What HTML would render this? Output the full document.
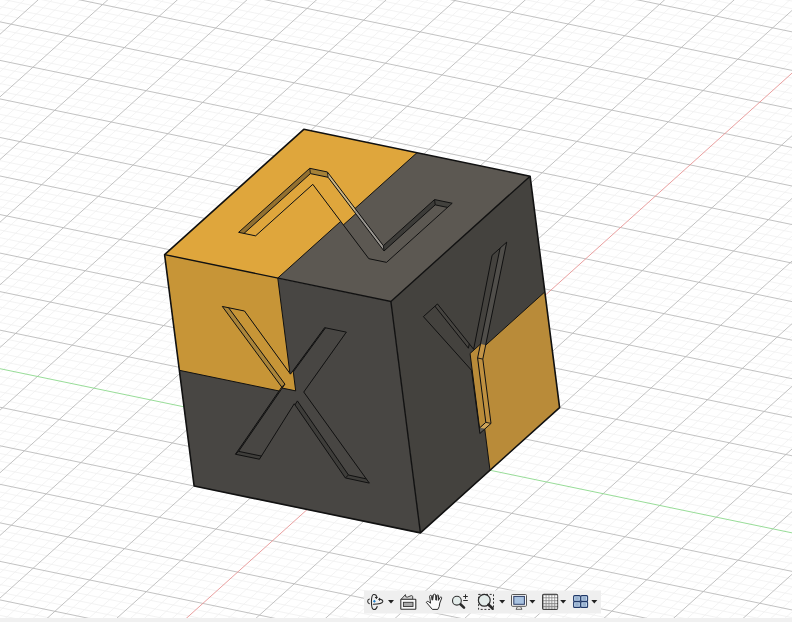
<!DOCTYPE html><html><head><meta charset="utf-8"><style>
html,body{margin:0;padding:0;width:792px;height:622px;overflow:hidden;background:#fff;font-family:"Liberation Sans",sans-serif}
svg{position:absolute;left:0;top:0}
</style></head><body><svg width="792" height="622" viewBox="0 0 792 622"><defs><clipPath id="clip_top"><polygon points="238.62,232.33 309.75,168.30 327.40,171.96 383.32,245.67 434.55,199.56 452.20,203.22 386.50,262.36 368.85,258.70 312.80,184.35 255.59,235.85" /></clipPath><clipPath id="floor_top"><polygon points="239.30,237.65 310.43,173.62 328.08,177.28 384.00,250.99 435.23,204.88 452.88,208.54 387.18,267.68 369.53,264.02 313.48,189.67 256.27,241.17" /></clipPath><clipPath id="clip_left"><polygon points="222.32,306.44 244.50,311.03 290.45,374.17 324.61,327.64 346.34,332.14 303.74,392.02 369.33,483.12 345.31,477.91 294.22,403.79 259.43,459.21 235.44,454.24 281.73,387.01" /></clipPath><clipPath id="floor_left"><polygon points="225.52,303.56 247.70,308.15 293.65,371.29 327.81,324.76 349.54,329.26 306.94,389.14 372.53,480.23 348.51,475.03 297.42,400.91 262.63,456.33 238.64,451.36 284.93,384.13" /></clipPath><clipPath id="clip_right"><polygon points="423.40,316.62 437.46,303.96 473.65,349.29 492.08,255.31 506.70,242.15 482.81,359.09 491.01,423.42 479.88,433.45 471.52,370.29" /></clipPath><clipPath id="floor_right"><polygon points="418.19,315.54 432.25,302.88 468.44,348.21 486.88,254.23 501.49,241.07 477.61,358.01 485.81,422.34 474.67,432.37 466.31,369.21" /></clipPath></defs><rect width="792" height="622" fill="#fff"/><g stroke="#f0f0f0" stroke-width="0.8"><line x1="-589.97" y1="515.15" x2="147.78" y2="-148.93" /><line x1="-578.65" y1="517.49" x2="159.09" y2="-146.58" /><line x1="-567.34" y1="519.84" x2="170.41" y2="-144.24" /><line x1="-556.02" y1="522.18" x2="181.72" y2="-141.89" /><line x1="-533.39" y1="526.87" x2="204.35" y2="-137.20" /><line x1="-522.08" y1="529.22" x2="215.67" y2="-134.86" /><line x1="-510.76" y1="531.56" x2="226.98" y2="-132.51" /><line x1="-499.45" y1="533.91" x2="238.30" y2="-130.17" /><line x1="-476.82" y1="538.60" x2="260.93" y2="-125.48" /><line x1="-465.50" y1="540.94" x2="272.24" y2="-123.13" /><line x1="-454.19" y1="543.29" x2="283.56" y2="-120.79" /><line x1="-442.87" y1="545.63" x2="294.87" y2="-118.44" /><line x1="-420.24" y1="550.32" x2="317.50" y2="-113.75" /><line x1="-408.93" y1="552.67" x2="328.82" y2="-111.41" /><line x1="-397.61" y1="555.01" x2="340.13" y2="-109.06" /><line x1="-386.30" y1="557.36" x2="351.45" y2="-106.72" /><line x1="-363.67" y1="562.05" x2="374.08" y2="-102.03" /><line x1="-352.35" y1="564.39" x2="385.39" y2="-99.68" /><line x1="-341.04" y1="566.74" x2="396.71" y2="-97.34" /><line x1="-329.72" y1="569.08" x2="408.02" y2="-94.99" /><line x1="-307.09" y1="573.77" x2="430.65" y2="-90.30" /><line x1="-295.78" y1="576.12" x2="441.97" y2="-87.96" /><line x1="-284.46" y1="578.46" x2="453.28" y2="-85.61" /><line x1="-273.15" y1="580.81" x2="464.60" y2="-83.27" /><line x1="-250.52" y1="585.50" x2="487.23" y2="-78.58" /><line x1="-239.20" y1="587.84" x2="498.54" y2="-76.23" /><line x1="-227.89" y1="590.19" x2="509.86" y2="-73.89" /><line x1="-216.57" y1="592.53" x2="521.17" y2="-71.54" /><line x1="-193.94" y1="597.22" x2="543.80" y2="-66.85" /><line x1="-182.63" y1="599.57" x2="555.12" y2="-64.51" /><line x1="-171.31" y1="601.91" x2="566.43" y2="-62.16" /><line x1="-160.00" y1="604.26" x2="577.75" y2="-59.82" /><line x1="-137.37" y1="608.95" x2="600.38" y2="-55.13" /><line x1="-126.05" y1="611.29" x2="611.69" y2="-52.78" /><line x1="-114.74" y1="613.64" x2="623.01" y2="-50.44" /><line x1="-103.42" y1="615.98" x2="634.32" y2="-48.09" /><line x1="-80.79" y1="620.67" x2="656.95" y2="-43.40" /><line x1="-69.48" y1="623.02" x2="668.27" y2="-41.06" /><line x1="-58.16" y1="625.36" x2="679.58" y2="-38.71" /><line x1="-46.85" y1="627.71" x2="690.90" y2="-36.37" /><line x1="-24.22" y1="632.40" x2="713.53" y2="-31.68" /><line x1="-12.90" y1="634.74" x2="724.84" y2="-29.33" /><line x1="-1.59" y1="637.09" x2="736.16" y2="-26.99" /><line x1="9.73" y1="639.43" x2="747.47" y2="-24.64" /><line x1="32.36" y1="644.12" x2="770.10" y2="-19.95" /><line x1="43.67" y1="646.47" x2="781.42" y2="-17.61" /><line x1="54.99" y1="648.81" x2="792.73" y2="-15.26" /><line x1="66.30" y1="651.16" x2="804.05" y2="-12.92" /><line x1="88.93" y1="655.85" x2="826.68" y2="-8.23" /><line x1="100.25" y1="658.19" x2="837.99" y2="-5.88" /><line x1="111.56" y1="660.54" x2="849.31" y2="-3.54" /><line x1="122.88" y1="662.88" x2="860.62" y2="-1.19" /><line x1="145.51" y1="667.57" x2="883.25" y2="3.50" /><line x1="156.82" y1="669.92" x2="894.57" y2="5.84" /><line x1="168.14" y1="672.26" x2="905.88" y2="8.19" /><line x1="179.45" y1="674.61" x2="917.20" y2="10.53" /><line x1="202.08" y1="679.30" x2="939.83" y2="15.22" /><line x1="213.40" y1="681.64" x2="951.14" y2="17.57" /><line x1="224.71" y1="683.99" x2="962.46" y2="19.91" /><line x1="236.03" y1="686.33" x2="973.77" y2="22.26" /><line x1="258.66" y1="691.02" x2="996.40" y2="26.95" /><line x1="269.97" y1="693.37" x2="1007.72" y2="29.29" /><line x1="281.29" y1="695.71" x2="1019.03" y2="31.64" /><line x1="292.60" y1="698.06" x2="1030.35" y2="33.98" /><line x1="315.23" y1="702.75" x2="1052.98" y2="38.67" /><line x1="326.55" y1="705.09" x2="1064.29" y2="41.02" /><line x1="337.86" y1="707.44" x2="1075.61" y2="43.36" /><line x1="349.18" y1="709.78" x2="1086.92" y2="45.71" /><line x1="371.81" y1="714.47" x2="1109.55" y2="50.40" /><line x1="383.12" y1="716.82" x2="1120.87" y2="52.74" /><line x1="394.44" y1="719.16" x2="1132.18" y2="55.09" /><line x1="405.75" y1="721.51" x2="1143.50" y2="57.43" /><line x1="428.38" y1="726.20" x2="1166.13" y2="62.12" /><line x1="439.70" y1="728.54" x2="1177.44" y2="64.47" /><line x1="451.01" y1="730.89" x2="1188.76" y2="66.81" /><line x1="462.33" y1="733.23" x2="1200.07" y2="69.16" /><line x1="484.96" y1="737.92" x2="1222.70" y2="73.85" /><line x1="496.27" y1="740.27" x2="1234.02" y2="76.19" /><line x1="507.59" y1="742.61" x2="1245.33" y2="78.54" /><line x1="518.90" y1="744.96" x2="1256.65" y2="80.88" /><line x1="541.53" y1="749.65" x2="1279.28" y2="85.57" /><line x1="552.85" y1="751.99" x2="1290.59" y2="87.92" /><line x1="564.16" y1="754.34" x2="1301.91" y2="90.26" /><line x1="575.48" y1="756.68" x2="1313.22" y2="92.61" /><line x1="598.11" y1="761.37" x2="1335.85" y2="97.30" /><line x1="609.42" y1="763.72" x2="1347.17" y2="99.64" /><line x1="620.74" y1="766.06" x2="1358.48" y2="101.99" /><line x1="632.05" y1="768.41" x2="1369.80" y2="104.33" /><line x1="654.68" y1="773.10" x2="1392.43" y2="109.02" /><line x1="-592.21" y1="508.02" x2="658.50" y2="767.23" /><line x1="-585.25" y1="501.75" x2="665.46" y2="760.96" /><line x1="-578.29" y1="495.49" x2="672.42" y2="754.70" /><line x1="-571.33" y1="489.22" x2="679.38" y2="748.43" /><line x1="-557.41" y1="476.69" x2="693.30" y2="735.90" /><line x1="-550.45" y1="470.43" x2="700.26" y2="729.64" /><line x1="-543.49" y1="464.16" x2="707.22" y2="723.37" /><line x1="-536.53" y1="457.90" x2="714.18" y2="717.11" /><line x1="-522.61" y1="445.37" x2="728.10" y2="704.58" /><line x1="-515.65" y1="439.10" x2="735.06" y2="698.31" /><line x1="-508.69" y1="432.84" x2="742.02" y2="692.05" /><line x1="-501.73" y1="426.57" x2="748.98" y2="685.78" /><line x1="-487.81" y1="414.04" x2="762.90" y2="673.25" /><line x1="-480.85" y1="407.78" x2="769.86" y2="666.99" /><line x1="-473.89" y1="401.51" x2="776.82" y2="660.72" /><line x1="-466.93" y1="395.25" x2="783.78" y2="654.46" /><line x1="-453.01" y1="382.72" x2="797.70" y2="641.93" /><line x1="-446.05" y1="376.45" x2="804.66" y2="635.66" /><line x1="-439.09" y1="370.19" x2="811.62" y2="629.40" /><line x1="-432.13" y1="363.92" x2="818.58" y2="623.13" /><line x1="-418.21" y1="351.39" x2="832.50" y2="610.60" /><line x1="-411.25" y1="345.13" x2="839.46" y2="604.34" /><line x1="-404.29" y1="338.86" x2="846.42" y2="598.07" /><line x1="-397.33" y1="332.60" x2="853.38" y2="591.81" /><line x1="-383.41" y1="320.07" x2="867.30" y2="579.28" /><line x1="-376.45" y1="313.80" x2="874.26" y2="573.01" /><line x1="-369.49" y1="307.54" x2="881.22" y2="566.75" /><line x1="-362.53" y1="301.27" x2="888.18" y2="560.48" /><line x1="-348.61" y1="288.74" x2="902.10" y2="547.95" /><line x1="-341.65" y1="282.48" x2="909.06" y2="541.69" /><line x1="-334.69" y1="276.21" x2="916.02" y2="535.42" /><line x1="-327.73" y1="269.95" x2="922.98" y2="529.16" /><line x1="-313.81" y1="257.42" x2="936.90" y2="516.63" /><line x1="-306.85" y1="251.15" x2="943.86" y2="510.36" /><line x1="-299.89" y1="244.89" x2="950.82" y2="504.10" /><line x1="-292.93" y1="238.62" x2="957.78" y2="497.83" /><line x1="-279.01" y1="226.09" x2="971.70" y2="485.30" /><line x1="-272.05" y1="219.83" x2="978.66" y2="479.04" /><line x1="-265.09" y1="213.56" x2="985.62" y2="472.77" /><line x1="-258.13" y1="207.30" x2="992.58" y2="466.51" /><line x1="-244.21" y1="194.77" x2="1006.50" y2="453.98" /><line x1="-237.25" y1="188.50" x2="1013.46" y2="447.71" /><line x1="-230.29" y1="182.24" x2="1020.42" y2="441.45" /><line x1="-223.33" y1="175.97" x2="1027.38" y2="435.18" /><line x1="-209.41" y1="163.44" x2="1041.30" y2="422.65" /><line x1="-202.45" y1="157.18" x2="1048.26" y2="416.39" /><line x1="-195.49" y1="150.91" x2="1055.22" y2="410.12" /><line x1="-188.53" y1="144.65" x2="1062.18" y2="403.86" /><line x1="-174.61" y1="132.12" x2="1076.10" y2="391.33" /><line x1="-167.65" y1="125.85" x2="1083.06" y2="385.06" /><line x1="-160.69" y1="119.59" x2="1090.02" y2="378.80" /><line x1="-153.73" y1="113.32" x2="1096.98" y2="372.53" /><line x1="-139.81" y1="100.79" x2="1110.90" y2="360.00" /><line x1="-132.85" y1="94.53" x2="1117.86" y2="353.74" /><line x1="-125.89" y1="88.26" x2="1124.82" y2="347.47" /><line x1="-118.93" y1="82.00" x2="1131.78" y2="341.21" /><line x1="-105.01" y1="69.47" x2="1145.70" y2="328.68" /><line x1="-98.05" y1="63.20" x2="1152.66" y2="322.41" /><line x1="-91.09" y1="56.94" x2="1159.62" y2="316.15" /><line x1="-84.13" y1="50.67" x2="1166.58" y2="309.88" /><line x1="-70.21" y1="38.14" x2="1180.50" y2="297.35" /><line x1="-63.25" y1="31.88" x2="1187.46" y2="291.09" /><line x1="-56.29" y1="25.61" x2="1194.42" y2="284.82" /><line x1="-49.33" y1="19.35" x2="1201.38" y2="278.56" /><line x1="-35.41" y1="6.82" x2="1215.30" y2="266.03" /><line x1="-28.45" y1="0.55" x2="1222.26" y2="259.76" /><line x1="-21.49" y1="-5.71" x2="1229.22" y2="253.50" /><line x1="-14.53" y1="-11.98" x2="1236.18" y2="247.23" /><line x1="-0.61" y1="-24.51" x2="1250.10" y2="234.70" /><line x1="6.35" y1="-30.77" x2="1257.06" y2="228.44" /><line x1="13.31" y1="-37.04" x2="1264.02" y2="222.17" /><line x1="20.27" y1="-43.30" x2="1270.98" y2="215.91" /><line x1="34.19" y1="-55.83" x2="1284.90" y2="203.38" /><line x1="41.15" y1="-62.10" x2="1291.86" y2="197.11" /><line x1="48.11" y1="-68.36" x2="1298.82" y2="190.85" /><line x1="55.07" y1="-74.63" x2="1305.78" y2="184.58" /><line x1="68.99" y1="-87.16" x2="1319.70" y2="172.05" /><line x1="75.95" y1="-93.42" x2="1326.66" y2="165.79" /><line x1="82.91" y1="-99.69" x2="1333.62" y2="159.52" /><line x1="89.87" y1="-105.95" x2="1340.58" y2="153.26" /><line x1="103.79" y1="-118.48" x2="1354.50" y2="140.73" /><line x1="110.75" y1="-124.75" x2="1361.46" y2="134.46" /><line x1="117.71" y1="-131.01" x2="1368.42" y2="128.20" /><line x1="124.67" y1="-137.28" x2="1375.38" y2="121.93" /><line x1="138.59" y1="-149.81" x2="1389.30" y2="109.40" /><line x1="145.55" y1="-156.07" x2="1396.26" y2="103.14" /></g><g stroke="#bbbbbb" stroke-width="0.9"><line x1="-601.28" y1="512.80" x2="136.46" y2="-151.27" /><line x1="-544.71" y1="524.53" x2="193.04" y2="-139.55" /><line x1="-488.13" y1="536.25" x2="249.61" y2="-127.82" /><line x1="-431.56" y1="547.98" x2="306.19" y2="-116.10" /><line x1="-374.98" y1="559.70" x2="362.76" y2="-104.37" /><line x1="-318.41" y1="571.43" x2="419.34" y2="-92.65" /><line x1="-261.83" y1="583.15" x2="475.91" y2="-80.92" /><line x1="-205.26" y1="594.88" x2="532.49" y2="-69.20" /><line x1="-148.68" y1="606.60" x2="589.06" y2="-57.47" /><line x1="-92.11" y1="618.33" x2="645.64" y2="-45.75" /><line x1="-35.53" y1="630.05" x2="702.21" y2="-34.02" /><line x1="21.04" y1="641.78" x2="758.79" y2="-22.30" /><line x1="77.62" y1="653.50" x2="815.36" y2="-10.57" /><line x1="190.77" y1="676.95" x2="928.51" y2="12.88" /><line x1="247.34" y1="688.68" x2="985.09" y2="24.60" /><line x1="303.92" y1="700.40" x2="1041.66" y2="36.33" /><line x1="360.49" y1="712.13" x2="1098.24" y2="48.05" /><line x1="417.07" y1="723.85" x2="1154.81" y2="59.78" /><line x1="473.64" y1="735.58" x2="1211.39" y2="71.50" /><line x1="530.22" y1="747.30" x2="1267.96" y2="83.23" /><line x1="586.79" y1="759.03" x2="1324.54" y2="94.95" /><line x1="643.37" y1="770.75" x2="1381.11" y2="106.68" /><line x1="-599.17" y1="514.28" x2="651.54" y2="773.49" /><line x1="-564.37" y1="482.96" x2="686.34" y2="742.17" /><line x1="-529.57" y1="451.63" x2="721.14" y2="710.84" /><line x1="-494.77" y1="420.31" x2="755.94" y2="679.52" /><line x1="-459.97" y1="388.98" x2="790.74" y2="648.19" /><line x1="-425.17" y1="357.66" x2="825.54" y2="616.87" /><line x1="-390.37" y1="326.33" x2="860.34" y2="585.54" /><line x1="-320.77" y1="263.68" x2="929.94" y2="522.89" /><line x1="-285.97" y1="232.36" x2="964.74" y2="491.57" /><line x1="-251.17" y1="201.03" x2="999.54" y2="460.24" /><line x1="-216.37" y1="169.71" x2="1034.34" y2="428.92" /><line x1="-181.57" y1="138.38" x2="1069.14" y2="397.59" /><line x1="-146.77" y1="107.06" x2="1103.94" y2="366.27" /><line x1="-111.97" y1="75.73" x2="1138.74" y2="334.94" /><line x1="-77.17" y1="44.41" x2="1173.54" y2="303.62" /><line x1="-42.37" y1="13.08" x2="1208.34" y2="272.29" /><line x1="-7.57" y1="-18.24" x2="1243.14" y2="240.97" /><line x1="27.23" y1="-49.57" x2="1277.94" y2="209.64" /><line x1="62.03" y1="-80.89" x2="1312.74" y2="178.32" /><line x1="96.83" y1="-112.22" x2="1347.54" y2="146.99" /><line x1="131.63" y1="-143.54" x2="1382.34" y2="115.67" /></g><line x1="-355.57" y1="295.01" x2="895.14" y2="554.22" stroke="#8cd88c" stroke-width="0.9"/><line x1="134.19" y1="665.23" x2="871.94" y2="1.15" stroke="#e69494" stroke-width="0.9"/><polygon points="164.60,254.60 390.90,301.50 530.10,176.20 303.80,129.30" fill="#5c5852"/><polygon points="164.60,254.60 277.75,278.05 416.95,152.75 303.80,129.30" fill="#dfa63c"/><line x1="277.75" y1="278.05" x2="416.95" y2="152.75" stroke="#111" stroke-width="1"/><g clip-path="url(#clip_top)"><polygon points="238.62,232.33 274.26,200.25 274.93,205.57 239.30,237.65" fill="#927030" stroke="#927030" stroke-width="0.3"/><polygon points="274.26,200.25 309.75,168.30 310.43,173.62 274.93,205.57" fill="#927030" stroke="#927030" stroke-width="0.3"/><line x1="238.62" y1="232.33" x2="239.30" y2="237.65" stroke="#111" stroke-width="0.9"/><polygon points="309.75,168.30 327.40,171.96 328.08,177.28 310.43,173.62" fill="#a68238" stroke="#a68238" stroke-width="0.3"/><line x1="309.75" y1="168.30" x2="310.43" y2="173.62" stroke="#111" stroke-width="0.9"/><polygon points="327.40,171.96 355.08,208.44 355.76,213.76 328.08,177.28" fill="#ccb787" stroke="#ccb787" stroke-width="0.3"/><polygon points="355.08,208.44 362.79,218.60 363.47,223.92 355.76,213.76" fill="#9c9892" stroke="#9c9892" stroke-width="0.3"/><polygon points="362.79,218.60 383.32,245.67 384.00,250.99 363.47,223.92" fill="#9c9892" stroke="#9c9892" stroke-width="0.3"/><line x1="327.40" y1="171.96" x2="328.08" y2="177.28" stroke="#111" stroke-width="0.9"/><polygon points="383.32,245.67 403.93,227.12 404.60,232.45 384.00,250.99" fill="#3c3b38" stroke="#3c3b38" stroke-width="0.3"/><polygon points="403.93,227.12 434.55,199.56 435.23,204.88 404.60,232.45" fill="#3c3b38" stroke="#3c3b38" stroke-width="0.3"/><line x1="383.32" y1="245.67" x2="384.00" y2="250.99" stroke="#111" stroke-width="0.9"/><polygon points="434.55,199.56 452.20,203.22 452.88,208.54 435.23,204.88" fill="#42413d" stroke="#42413d" stroke-width="0.3"/><line x1="434.55" y1="199.56" x2="435.23" y2="204.88" stroke="#111" stroke-width="0.9"/><polygon points="452.20,203.22 421.58,230.78 422.25,236.11 452.88,208.54" fill="#a29e98" stroke="#a29e98" stroke-width="0.3"/><polygon points="421.58,230.78 386.50,262.36 387.18,267.68 422.25,236.11" fill="#a29e98" stroke="#a29e98" stroke-width="0.3"/><line x1="452.20" y1="203.22" x2="452.88" y2="208.54" stroke="#111" stroke-width="0.9"/><polygon points="386.50,262.36 368.85,258.70 369.53,264.02 387.18,267.68" fill="#3c3b38" stroke="#3c3b38" stroke-width="0.3"/><line x1="386.50" y1="262.36" x2="387.18" y2="267.68" stroke="#111" stroke-width="0.9"/><polygon points="368.85,258.70 340.71,221.37 341.39,226.70 369.53,264.02" fill="#3c3b38" stroke="#3c3b38" stroke-width="0.3"/><polygon points="340.71,221.37 334.15,212.66 334.83,217.99 341.39,226.70" fill="#927030" stroke="#927030" stroke-width="0.3"/><polygon points="334.15,212.66 312.80,184.35 313.48,189.67 334.83,217.99" fill="#927030" stroke="#927030" stroke-width="0.3"/><line x1="368.85" y1="258.70" x2="369.53" y2="264.02" stroke="#111" stroke-width="0.9"/><polygon points="312.80,184.35 291.23,203.77 291.91,209.09 313.48,189.67" fill="#cfbb8e" stroke="#cfbb8e" stroke-width="0.3"/><polygon points="291.23,203.77 255.59,235.85 256.27,241.17 291.91,209.09" fill="#cfbb8e" stroke="#cfbb8e" stroke-width="0.3"/><line x1="312.80" y1="184.35" x2="313.48" y2="189.67" stroke="#111" stroke-width="0.9"/><polygon points="255.59,235.85 238.62,232.33 239.30,237.65 256.27,241.17" fill="#927030" stroke="#927030" stroke-width="0.3"/><line x1="255.59" y1="235.85" x2="256.27" y2="241.17" stroke="#111" stroke-width="0.9"/><g clip-path="url(#floor_top)"><polygon points="165.28,259.92 391.58,306.82 530.78,181.52 304.48,134.62" fill="#5c5852"/><polygon points="165.28,259.92 278.43,283.37 417.63,158.07 304.48,134.62" fill="#dfa63c"/><line x1="278.43" y1="283.37" x2="417.63" y2="158.07" stroke="#111" stroke-width="1"/></g><polygon points="239.30,237.65 310.43,173.62 328.08,177.28 384.00,250.99 435.23,204.88 452.88,208.54 387.18,267.68 369.53,264.02 313.48,189.67 256.27,241.17" fill="none" stroke="#111" stroke-width="1"/></g><polygon points="238.62,232.33 309.75,168.30 327.40,171.96 383.32,245.67 434.55,199.56 452.20,203.22 386.50,262.36 368.85,258.70 312.80,184.35 255.59,235.85" fill="none" stroke="#111" stroke-width="1"/><polygon points="164.60,254.60 390.90,301.50 420.40,532.90 194.10,486.00" fill="#484643"/><polygon points="164.60,254.60 277.75,278.05 292.50,393.75 179.35,370.30" fill="#c79537"/><line x1="277.75" y1="278.05" x2="292.50" y2="393.75" stroke="#111" stroke-width="1"/><line x1="179.35" y1="370.30" x2="292.50" y2="393.75" stroke="#111" stroke-width="1"/><g clip-path="url(#clip_left)"><polygon points="222.32,306.44 244.50,311.03 247.70,308.15 225.52,303.56" fill="#947230" stroke="#947230" stroke-width="0.3"/><line x1="222.32" y1="306.44" x2="225.52" y2="303.56" stroke="#111" stroke-width="0.9"/><polygon points="244.50,311.03 289.91,373.44 293.11,370.56 247.70,308.15" fill="#a5803a" stroke="#a5803a" stroke-width="0.3"/><polygon points="289.91,373.44 290.45,374.17 293.65,371.29 293.11,370.56" fill="#403f3b" stroke="#403f3b" stroke-width="0.3"/><line x1="244.50" y1="311.03" x2="247.70" y2="308.15" stroke="#111" stroke-width="0.9"/><polygon points="290.45,374.17 324.61,327.64 327.81,324.76 293.65,371.29" fill="#3c3b38" stroke="#3c3b38" stroke-width="0.3"/><line x1="290.45" y1="374.17" x2="293.65" y2="371.29" stroke="#111" stroke-width="0.9"/><polygon points="324.61,327.64 346.34,332.14 349.54,329.26 327.81,324.76" fill="#3c3b38" stroke="#3c3b38" stroke-width="0.3"/><line x1="324.61" y1="327.64" x2="327.81" y2="324.76" stroke="#111" stroke-width="0.9"/><polygon points="346.34,332.14 303.74,392.02 306.94,389.14 349.54,329.26" fill="#41403c" stroke="#41403c" stroke-width="0.3"/><line x1="346.34" y1="332.14" x2="349.54" y2="329.26" stroke="#111" stroke-width="0.9"/><polygon points="303.74,392.02 307.17,396.79 310.37,393.91 306.94,389.14" fill="#403f3b" stroke="#403f3b" stroke-width="0.3"/><polygon points="307.17,396.79 369.33,483.12 372.53,480.23 310.37,393.91" fill="#403f3b" stroke="#403f3b" stroke-width="0.3"/><line x1="303.74" y1="392.02" x2="306.94" y2="389.14" stroke="#111" stroke-width="0.9"/><polygon points="369.33,483.12 345.31,477.91 348.51,475.03 372.53,480.23" fill="#3f3e3b" stroke="#3f3e3b" stroke-width="0.3"/><line x1="369.33" y1="483.12" x2="372.53" y2="480.23" stroke="#111" stroke-width="0.9"/><polygon points="345.31,477.91 294.22,403.79 297.42,400.91 348.51,475.03" fill="#3e3d3a" stroke="#3e3d3a" stroke-width="0.3"/><line x1="345.31" y1="477.91" x2="348.51" y2="475.03" stroke="#111" stroke-width="0.9"/><polygon points="294.22,403.79 293.85,404.38 297.06,401.50 297.42,400.91" fill="#41403c" stroke="#41403c" stroke-width="0.3"/><polygon points="293.85,404.38 259.43,459.21 262.63,456.33 297.06,401.50" fill="#41403c" stroke="#41403c" stroke-width="0.3"/><line x1="294.22" y1="403.79" x2="297.42" y2="400.91" stroke="#111" stroke-width="0.9"/><polygon points="259.43,459.21 235.44,454.24 238.64,451.36 262.63,456.33" fill="#3f3e3b" stroke="#3f3e3b" stroke-width="0.3"/><line x1="259.43" y1="459.21" x2="262.63" y2="456.33" stroke="#111" stroke-width="0.9"/><polygon points="235.44,454.24 279.01,390.95 282.21,388.07 238.64,451.36" fill="#3c3b38" stroke="#3c3b38" stroke-width="0.3"/><polygon points="279.01,390.95 281.73,387.01 284.93,384.13 282.21,388.07" fill="#947230" stroke="#947230" stroke-width="0.3"/><line x1="235.44" y1="454.24" x2="238.64" y2="451.36" stroke="#111" stroke-width="0.9"/><polygon points="281.73,387.01 222.32,306.44 225.52,303.56 284.93,384.13" fill="#ab853a" stroke="#ab853a" stroke-width="0.3"/><line x1="281.73" y1="387.01" x2="284.93" y2="384.13" stroke="#111" stroke-width="0.9"/><g clip-path="url(#floor_left)"><polygon points="167.80,251.72 394.10,298.62 423.60,530.02 197.30,483.12" fill="#484643"/><polygon points="167.80,251.72 280.95,275.17 295.70,390.87 182.55,367.42" fill="#c79537"/><line x1="280.95" y1="275.17" x2="295.70" y2="390.87" stroke="#111" stroke-width="1"/><line x1="182.55" y1="367.42" x2="295.70" y2="390.87" stroke="#111" stroke-width="1"/></g><polygon points="225.52,303.56 247.70,308.15 293.65,371.29 327.81,324.76 349.54,329.26 306.94,389.14 372.53,480.23 348.51,475.03 297.42,400.91 262.63,456.33 238.64,451.36 284.93,384.13" fill="none" stroke="#111" stroke-width="1"/></g><polygon points="222.32,306.44 244.50,311.03 290.45,374.17 324.61,327.64 346.34,332.14 303.74,392.02 369.33,483.12 345.31,477.91 294.22,403.79 259.43,459.21 235.44,454.24 281.73,387.01" fill="none" stroke="#111" stroke-width="1"/><polygon points="390.90,301.50 530.10,176.20 559.60,407.60 420.40,532.90" fill="#44423e"/><polygon points="475.25,354.55 544.85,291.90 559.60,407.60 490.00,470.25" fill="#b98b39"/><line x1="475.25" y1="354.55" x2="544.85" y2="291.90" stroke="#111" stroke-width="1"/><line x1="475.25" y1="354.55" x2="490.00" y2="470.25" stroke="#111" stroke-width="1"/><g clip-path="url(#clip_right)"><polygon points="423.40,316.62 437.46,303.96 432.25,302.88 418.19,315.54" fill="#3c3b38" stroke="#3c3b38" stroke-width="0.3"/><line x1="423.40" y1="316.62" x2="418.19" y2="315.54" stroke="#111" stroke-width="0.9"/><polygon points="437.46,303.96 473.65,349.29 468.44,348.21 432.25,302.88" fill="#464440" stroke="#464440" stroke-width="0.3"/><line x1="437.46" y1="303.96" x2="432.25" y2="302.88" stroke="#111" stroke-width="0.9"/><polygon points="473.65,349.29 474.21,346.41 469.01,345.33 468.44,348.21" fill="#3c3b38" stroke="#3c3b38" stroke-width="0.3"/><polygon points="474.21,346.41 492.08,255.31 486.88,254.23 469.01,345.33" fill="#3c3b38" stroke="#3c3b38" stroke-width="0.3"/><line x1="473.65" y1="349.29" x2="468.44" y2="348.21" stroke="#111" stroke-width="0.9"/><polygon points="492.08,255.31 506.70,242.15 501.49,241.07 486.88,254.23" fill="#3c3b38" stroke="#3c3b38" stroke-width="0.3"/><line x1="492.08" y1="255.31" x2="486.88" y2="254.23" stroke="#111" stroke-width="0.9"/><polygon points="506.70,242.15 485.65,345.19 480.45,344.11 501.49,241.07" fill="#504e4a" stroke="#504e4a" stroke-width="0.3"/><polygon points="485.65,345.19 482.81,359.09 477.61,358.01 480.45,344.11" fill="#c39446" stroke="#c39446" stroke-width="0.3"/><line x1="506.70" y1="242.15" x2="501.49" y2="241.07" stroke="#111" stroke-width="0.9"/><polygon points="482.81,359.09 491.01,423.42 485.81,422.34 477.61,358.01" fill="#bf9040" stroke="#bf9040" stroke-width="0.3"/><line x1="482.81" y1="359.09" x2="477.61" y2="358.01" stroke="#111" stroke-width="0.9"/><polygon points="491.01,423.42 484.75,429.06 479.54,427.98 485.81,422.34" fill="#cfa458" stroke="#cfa458" stroke-width="0.3"/><polygon points="484.75,429.06 479.88,433.45 474.67,432.37 479.54,427.98" fill="#5a5853" stroke="#5a5853" stroke-width="0.3"/><line x1="491.01" y1="423.42" x2="485.81" y2="422.34" stroke="#111" stroke-width="0.9"/><polygon points="479.88,433.45 471.52,370.29 466.31,369.21 474.67,432.37" fill="#3c3b38" stroke="#3c3b38" stroke-width="0.3"/><line x1="479.88" y1="433.45" x2="474.67" y2="432.37" stroke="#111" stroke-width="0.9"/><polygon points="471.52,370.29 465.37,363.44 460.17,362.36 466.31,369.21" fill="#484643" stroke="#484643" stroke-width="0.3"/><polygon points="465.37,363.44 423.40,316.62 418.19,315.54 460.17,362.36" fill="#484643" stroke="#484643" stroke-width="0.3"/><line x1="471.52" y1="370.29" x2="466.31" y2="369.21" stroke="#111" stroke-width="0.9"/><g clip-path="url(#floor_right)"><polygon points="385.70,300.42 524.90,175.12 554.40,406.52 415.20,531.82" fill="#44423e"/><polygon points="470.05,353.47 539.65,290.82 554.40,406.52 484.80,469.17" fill="#b98b39"/><line x1="470.05" y1="353.47" x2="539.65" y2="290.82" stroke="#111" stroke-width="1"/><line x1="470.05" y1="353.47" x2="484.80" y2="469.17" stroke="#111" stroke-width="1"/></g><polygon points="418.19,315.54 432.25,302.88 468.44,348.21 486.88,254.23 501.49,241.07 477.61,358.01 485.81,422.34 474.67,432.37 466.31,369.21" fill="none" stroke="#111" stroke-width="1"/></g><polygon points="423.40,316.62 437.46,303.96 473.65,349.29 492.08,255.31 506.70,242.15 482.81,359.09 491.01,423.42 479.88,433.45 471.52,370.29" fill="none" stroke="#111" stroke-width="1"/><polygon points="164.60,254.60 303.80,129.30 530.10,176.20 559.60,407.60 420.40,532.90 194.10,486.00" fill="none" stroke="#111" stroke-width="1.6" stroke-linejoin="round"/><polyline points="164.60,254.60 390.90,301.50 530.10,176.20" fill="none" stroke="#111" stroke-width="1.4"/><line x1="390.90" y1="301.50" x2="420.40" y2="532.90" stroke="#111" stroke-width="1.4"/><rect x="0" y="618" width="792" height="4" fill="#f0f0f0"/><rect x="364" y="590.5" width="237" height="23" fill="#efefef"/><g fill="none" stroke="#2a2a2a" stroke-width="1.05" stroke-linecap="round"><path d="M369.4,599.1 C367.1,599.6 367.1,603.1 369.4,603.7"/><path d="M376.8,596.4 C376.1,594.7 374.6,594.3 373.6,594.5 C370.7,595.3 370.7,608.7 373.6,609.4 C375.2,609.8 376.6,608.4 377.2,606.5"/><path d="M379.6,599.3 C381.6,599.4 383,600.3 382.8,601.7 C382.5,603.5 380,604.1 373.3,604.2"/><path d="M375.4,597.5 h1.9 M376.35,596.5 v2 M378.6,599.2 h1.9 M379.55,598.2 v2"/></g><polygon points="374.4,599.8 375.9,601.3 374.4,602.8 372.9,601.3" fill="#1f7fc8"/><polygon points="388,600 394,600 391,603.6" fill="#222"/><rect x="400.8" y="599.3" width="15" height="10" fill="#fafafa" stroke="#333" stroke-width="1.1" rx="0.5"/><rect x="403.4" y="602.3" width="9.6" height="4.2" fill="#aaa" stroke="#333" stroke-width="0.9"/><path d="M401.2,599.2 L405.4,594.6 L405.8,596.9 L407.5,597.1 L411.3,595.6 C412.3,595.4 412.7,596.2 412.7,597 L412.7,599.2 Z" fill="#d6d6d6" stroke="#333" stroke-width="0.9" stroke-linejoin="round"/><path d="M426.3,602.3 C426.8,601.2 428,601.1 428.8,601.8 L430.6,603.2 L429.6,596.3 C429.6,595.1 431.6,595 431.7,596.3 L432.3,599.8 L433.2,595 C433.4,593.9 435.6,593.9 435.8,595 L436.1,600 L436.9,595.6 C437.2,594.6 438.8,594.8 438.6,595.8 L438.4,600.4 L440.1,597.4 C440.6,596.6 442,597 441.7,598.1 L439.8,603 L439.2,606.6 L437.8,609.4 L432.4,609.4 Z" fill="#fbfbfb" stroke="#2a2a2a" stroke-width="1" stroke-linejoin="round"/><path d="M431.7,596.3 L432.2,600.3 M433.2,595 L432.7,600.2 M435.8,595 L436.1,600.4 M436.9,595.6 L436.6,600.4" stroke="#2a2a2a" stroke-width="0.9" fill="none"/><circle cx="456.9" cy="600.7" r="4.4" fill="#e3ecea" stroke="#333" stroke-width="1.1"/><line x1="460.5" y1="604.3" x2="464" y2="607.6" stroke="#2a2a2a" stroke-width="2.6" stroke-linecap="round"/><path d="M463.2,596.5 h4.6 M465.5,594.3 v4.5 M463.2,600.5 h4.6" stroke="#2a2a2a" stroke-width="1" fill="none"/><rect x="478.6" y="594.4" width="14.9" height="15" fill="none" stroke="#333" stroke-width="1" stroke-dasharray="2,1.7"/><circle cx="484.3" cy="600.3" r="5.9" fill="#e3ecea" stroke="#2a2a2a" stroke-width="1.2"/><line x1="488.6" y1="604.8" x2="492.4" y2="608.3" stroke="#2a2a2a" stroke-width="2.8" stroke-linecap="round"/><polygon points="499.2,600 505.2,600 502.2,603.6" fill="#222"/><rect x="511.5" y="594.5" width="15" height="11.8" fill="#f4f4f4" stroke="#555" stroke-width="1" rx="1"/><rect x="513.8" y="596.4" width="10.6" height="7.9" fill="#a9c3e1" stroke="#2c3e66" stroke-width="1"/><path d="M516,609.3 L517.5,606.6 L520.5,606.6 L522,609.3 Z" fill="#eee" stroke="#555" stroke-width="0.9"/><polygon points="529.4,600 535.4,600 532.4,603.6" fill="#222"/><rect x="542.6" y="594.3" width="15" height="15.2" fill="#808080" stroke="#3a3a3a" stroke-width="1.1" rx="1.2"/><g><rect x="543.55" y="595.30" width="2.15" height="2.15" fill="#ffffff"/><rect x="543.55" y="598.20" width="2.15" height="2.15" fill="#fbfbfb"/><rect x="543.55" y="601.10" width="2.15" height="2.15" fill="#eeeeee"/><rect x="543.55" y="604.00" width="2.15" height="2.15" fill="#dddddd"/><rect x="543.55" y="606.90" width="2.15" height="2.15" fill="#d4d4d4"/><rect x="546.45" y="595.30" width="2.15" height="2.15" fill="#ffffff"/><rect x="546.45" y="598.20" width="2.15" height="2.15" fill="#fbfbfb"/><rect x="546.45" y="601.10" width="2.15" height="2.15" fill="#eeeeee"/><rect x="546.45" y="604.00" width="2.15" height="2.15" fill="#dddddd"/><rect x="546.45" y="606.90" width="2.15" height="2.15" fill="#d4d4d4"/><rect x="549.35" y="595.30" width="2.15" height="2.15" fill="#ffffff"/><rect x="549.35" y="598.20" width="2.15" height="2.15" fill="#fbfbfb"/><rect x="549.35" y="601.10" width="2.15" height="2.15" fill="#eeeeee"/><rect x="549.35" y="604.00" width="2.15" height="2.15" fill="#dddddd"/><rect x="549.35" y="606.90" width="2.15" height="2.15" fill="#d4d4d4"/><rect x="552.25" y="595.30" width="2.15" height="2.15" fill="#ffffff"/><rect x="552.25" y="598.20" width="2.15" height="2.15" fill="#fbfbfb"/><rect x="552.25" y="601.10" width="2.15" height="2.15" fill="#eeeeee"/><rect x="552.25" y="604.00" width="2.15" height="2.15" fill="#dddddd"/><rect x="552.25" y="606.90" width="2.15" height="2.15" fill="#d4d4d4"/><rect x="555.15" y="595.30" width="2.15" height="2.15" fill="#ffffff"/><rect x="555.15" y="598.20" width="2.15" height="2.15" fill="#fbfbfb"/><rect x="555.15" y="601.10" width="2.15" height="2.15" fill="#eeeeee"/><rect x="555.15" y="604.00" width="2.15" height="2.15" fill="#dddddd"/><rect x="555.15" y="606.90" width="2.15" height="2.15" fill="#d4d4d4"/></g><polygon points="560.2,600 566.2,600 563.2,603.6" fill="#222"/><rect x="573.6" y="595.6" width="6.8" height="5.8" rx="1" fill="#c3d8f0" stroke="#1f3766" stroke-width="1.05"/><rect x="575.2" y="597.1" width="3.6" height="2.8" fill="#95afcc"/><rect x="580.8" y="595.6" width="6.8" height="5.8" rx="1" fill="#c3d8f0" stroke="#1f3766" stroke-width="1.05"/><rect x="582.4" y="597.1" width="3.6" height="2.8" fill="#95afcc"/><rect x="573.6" y="601.6" width="6.8" height="5.8" rx="1" fill="#c3d8f0" stroke="#1f3766" stroke-width="1.05"/><rect x="575.2" y="603.1" width="3.6" height="2.8" fill="#95afcc"/><rect x="580.8" y="601.6" width="6.8" height="5.8" rx="1" fill="#c3d8f0" stroke="#1f3766" stroke-width="1.05"/><rect x="582.4" y="603.1" width="3.6" height="2.8" fill="#95afcc"/><polygon points="591.3,600 597.3,600 594.3,603.6" fill="#222"/></svg></body></html>
